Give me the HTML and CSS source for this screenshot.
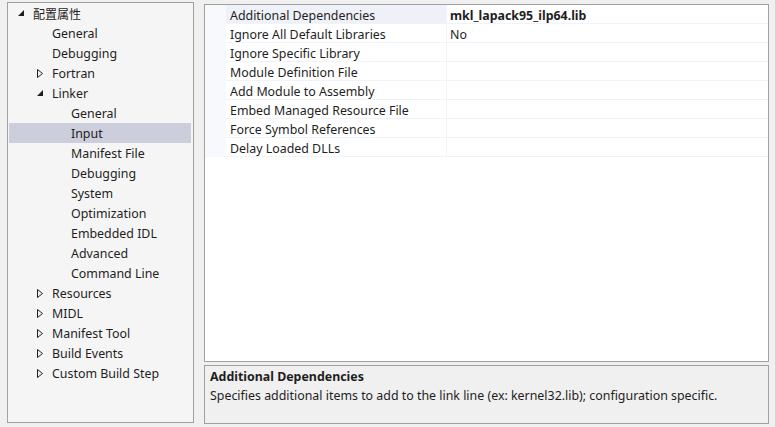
FILE: index.html
```html
<!DOCTYPE html>
<html>
<head>
<meta charset="utf-8">
<link rel="stylesheet" href="styles.css">
</head>
<body>
<div class="window">
  <div class="tree">
    <div class="node lvl0"><span class="tog"><svg width="7" height="7" viewBox="0 0 7 7"><polygon points="6,0 6,6 0,6" fill="#1e1e1e"/></svg></span><span class="cjk">配置属性</span></div>
    <div class="node lvl1"><span class="tog"></span>General</div>
    <div class="node lvl1"><span class="tog"></span>Debugging</div>
    <div class="node lvl1"><span class="tog"><svg width="7" height="9" viewBox="0 0 7 9"><polygon points="0.5,0.5 5.5,4.5 0.5,8.5" fill="none" stroke="#1e1e1e" stroke-width="1"/></svg></span>Fortran</div>
    <div class="node lvl1"><span class="tog"><svg width="7" height="7" viewBox="0 0 7 7"><polygon points="6,0 6,6 0,6" fill="#1e1e1e"/></svg></span>Linker</div>
    <div class="node lvl2"><span class="tog"></span>General</div>
    <div class="node lvl2 selected"><span class="tog"></span>Input</div>
    <div class="node lvl2"><span class="tog"></span>Manifest File</div>
    <div class="node lvl2"><span class="tog"></span>Debugging</div>
    <div class="node lvl2"><span class="tog"></span>System</div>
    <div class="node lvl2"><span class="tog"></span>Optimization</div>
    <div class="node lvl2"><span class="tog"></span>Embedded IDL</div>
    <div class="node lvl2"><span class="tog"></span>Advanced</div>
    <div class="node lvl2"><span class="tog"></span>Command Line</div>
    <div class="node lvl1"><span class="tog"><svg width="7" height="9" viewBox="0 0 7 9"><polygon points="0.5,0.5 5.5,4.5 0.5,8.5" fill="none" stroke="#1e1e1e" stroke-width="1"/></svg></span>Resources</div>
    <div class="node lvl1"><span class="tog"><svg width="7" height="9" viewBox="0 0 7 9"><polygon points="0.5,0.5 5.5,4.5 0.5,8.5" fill="none" stroke="#1e1e1e" stroke-width="1"/></svg></span>MIDL</div>
    <div class="node lvl1"><span class="tog"><svg width="7" height="9" viewBox="0 0 7 9"><polygon points="0.5,0.5 5.5,4.5 0.5,8.5" fill="none" stroke="#1e1e1e" stroke-width="1"/></svg></span>Manifest Tool</div>
    <div class="node lvl1"><span class="tog"><svg width="7" height="9" viewBox="0 0 7 9"><polygon points="0.5,0.5 5.5,4.5 0.5,8.5" fill="none" stroke="#1e1e1e" stroke-width="1"/></svg></span>Build Events</div>
    <div class="node lvl1"><span class="tog"><svg width="7" height="9" viewBox="0 0 7 9"><polygon points="0.5,0.5 5.5,4.5 0.5,8.5" fill="none" stroke="#1e1e1e" stroke-width="1"/></svg></span>Custom Build Step</div>
  </div>
  <div class="right">
    <div class="grid">
      <div class="row first"><div class="gutter"></div><div class="label">Additional Dependencies</div><div class="value bold">mkl_lapack95_ilp64.lib</div></div>
      <div class="row"><div class="gutter"></div><div class="label">Ignore All Default Libraries</div><div class="value">No</div></div>
      <div class="row"><div class="gutter"></div><div class="label">Ignore Specific Library</div><div class="value"></div></div>
      <div class="row"><div class="gutter"></div><div class="label">Module Definition File</div><div class="value"></div></div>
      <div class="row"><div class="gutter"></div><div class="label">Add Module to Assembly</div><div class="value"></div></div>
      <div class="row"><div class="gutter"></div><div class="label">Embed Managed Resource File</div><div class="value"></div></div>
      <div class="row"><div class="gutter"></div><div class="label">Force Symbol References</div><div class="value"></div></div>
      <div class="row"><div class="gutter"></div><div class="label">Delay Loaded DLLs</div><div class="value"></div></div>
    </div>
    <div class="desc">
      <div class="desc-title">Additional Dependencies</div>
      <div class="desc-text">Specifies additional items to add to the link line (ex: kernel32.lib); configuration specific.</div>
    </div>
  </div>
</div>
</body>
</html>
```
FILE: styles.css
```css
html, body {
  margin: 0;
  padding: 0;
  background: #f0f0f0;
}
body {
  font-family: "Noto Sans", "Noto Sans CJK SC", sans-serif;
  font-size: 12.4px;
  color: #1e1e1e;
}
.window {
  display: flex;
  align-items: flex-start;
  width: 775px;
  height: 427px;
  box-sizing: border-box;
  padding: 2px 0 0 7px;
}
.tree {
  width: 184px;
  height: 419px;
  border: 1px solid #a0a0a0;
  background: #f5f5f5;
  padding: 0 0 0 1px;
  box-sizing: content-box;
  flex: none;
}
.node {
  display: flex;
  align-items: center;
  height: 20px;
  width: 182px;
  box-sizing: border-box;
  white-space: nowrap;
}
.node.selected {
  background: #cccedb;
}
.lvl0 { padding-left: 9px; }
.lvl1 { padding-left: 28px; }
.lvl2 { padding-left: 47px; }
.tog {
  width: 15px;
  height: 20px;
  display: flex;
  align-items: center;
  flex: none;
}
.cjk {
  font-family: "Noto Sans CJK SC", sans-serif;
  font-size: 12px;
}
.right {
  margin-left: 10px;
  margin-top: 2px;
  display: flex;
  flex-direction: column;
  gap: 3px;
  width: 565px;
}
.grid {
  height: 356px;
  border: 1px solid #a0a0a0;
  background: #ffffff;
}
.row {
  display: flex;
  height: 19px;
  box-sizing: border-box;
}
.gutter {
  width: 21px;
  background: #f7f9fc;
  flex: none;
}
.label {
  width: 221px;
  flex: none;
  padding-left: 4px;
  padding-top: 3px;
  box-sizing: border-box;
  border-bottom: 1px solid #f0f3f9;
  border-right: 1px solid #f0f3f9;
  line-height: 15px;
  white-space: nowrap;
  overflow: hidden;
}
.first .label {
  background: #eef1f7;
}
.value {
  flex: 1;
  padding-left: 3px;
  padding-top: 3px;
  border-bottom: 1px solid #f0f3f9;
  line-height: 15px;
  white-space: nowrap;
}
.bold {
  font-weight: bold;
}
.desc {
  border: 1px solid #a0a0a0;
  background: #f0f0f0;
  padding: 1px 0 0 5px;
  box-sizing: border-box;
  height: 59px;
}
.desc-title {
  font-weight: bold;
  line-height: 19px;
}
.desc-text {
  line-height: 19px;
}
```
